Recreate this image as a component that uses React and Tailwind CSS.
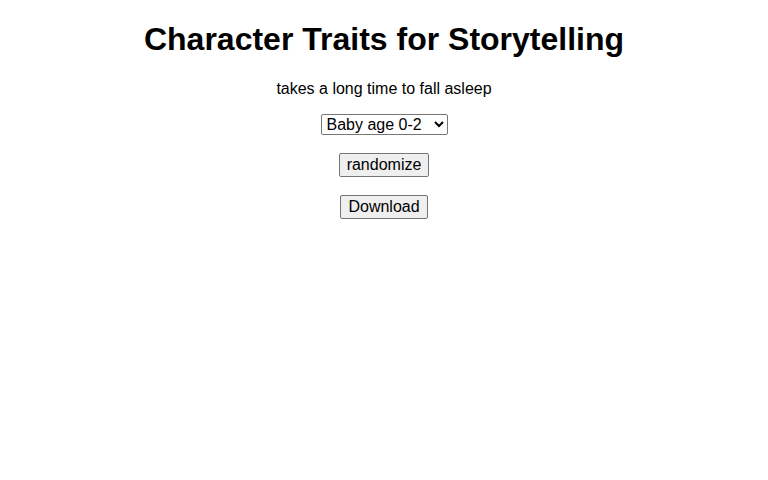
export default function App() {
  return (
    <div className="min-h-screen bg-white text-black font-['Liberation_Sans',Arial,sans-serif] flex flex-col items-center">
      <h1 className="mt-[21px] text-[32px] leading-[37px] font-bold">Character Traits for Storytelling</h1>
      <p className="mt-[22px] text-base leading-[18px]">takes a long time to fall asleep</p>

      <div className="mt-[16px] h-[21px] flex items-center">
        <select
          defaultValue="baby"
          className="h-[21px] w-[127px] text-base leading-[18px] bg-white border border-[#767676] rounded-[2px] px-[1px] appearance-auto"
        >
          <option value="baby">Baby age 0-2</option>
          <option value="child">Child age 3-12</option>
          <option value="teen">Teen age 13-19</option>
          <option value="adult">Adult</option>
        </select>
      </div>

      <button className="mt-[18px] h-[24px] px-[7px] text-base leading-[18px] bg-[#efefef] border border-[#767676] rounded-[2px]">
        randomize
      </button>

      <button className="mt-[18px] h-[24px] px-[7px] text-base leading-[18px] bg-[#efefef] border border-[#767676] rounded-[2px]">
        Download
      </button>
    </div>
  );
}
